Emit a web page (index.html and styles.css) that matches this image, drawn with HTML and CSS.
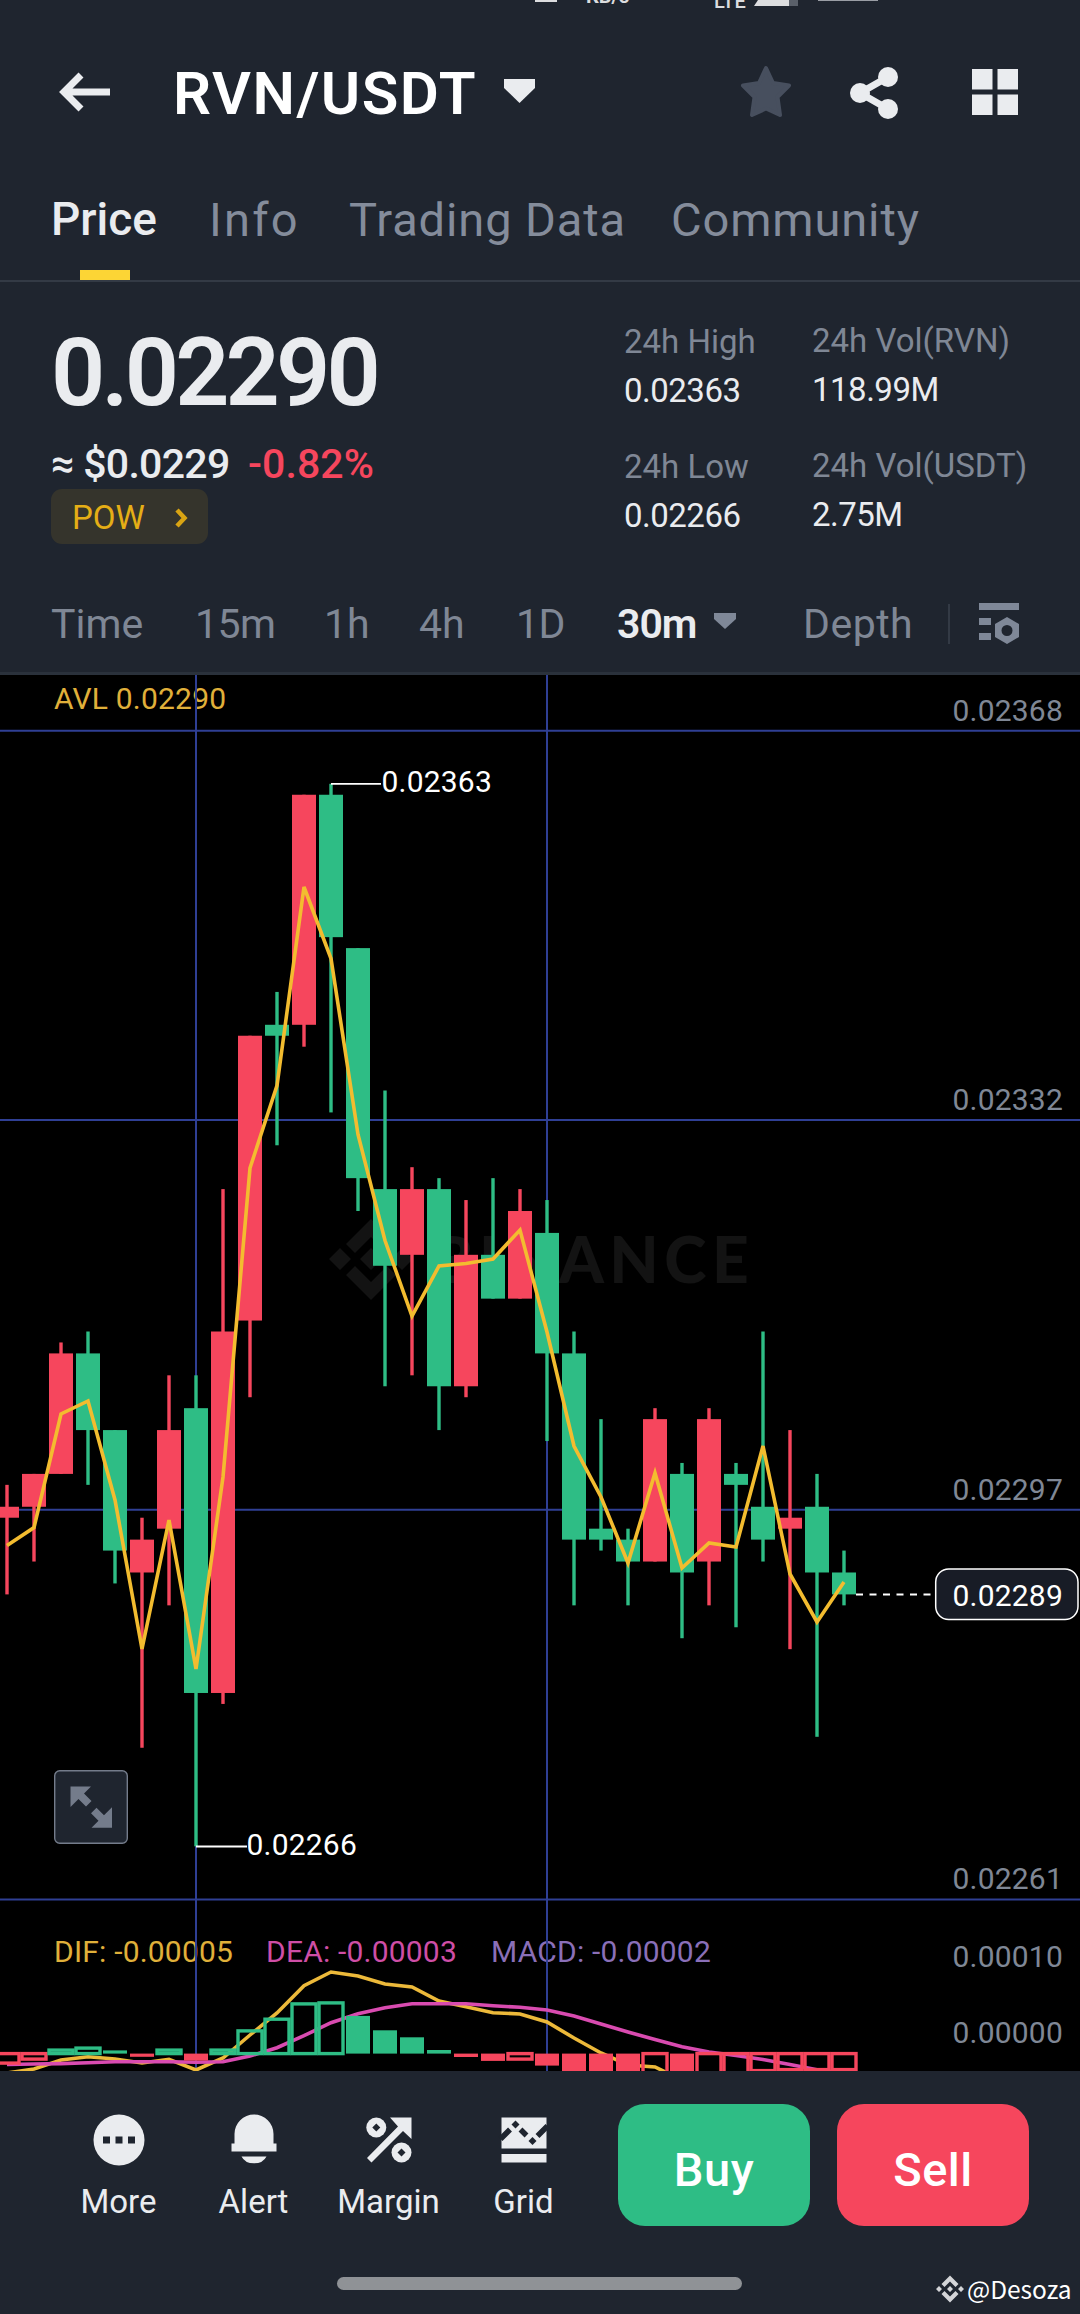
FILE: index.html
```html
<!DOCTYPE html>
<html lang="en">
<head>
    <meta charset="UTF-8">
    <meta name="viewport" content="width=device-width, initial-scale=1.0">
    <title>RVN/USDT</title>
    <link rel="stylesheet" href="styles.css">
</head>
<body>
    <div class="status-bar">
        <span class="status-glyph"></span>
        <span class="status-speed">KB/s</span>
        <span class="status-lte">LTE</span>
        <svg class="status-signal" width="44" height="6" viewBox="0 0 44 6">
            <path d="M4 0H35V6H0Z" fill="#dcdddf"/>
            <path d="M35 0H44V6H35Z" fill="#5a606a"/>
        </svg>
        <span class="status-battery"></span>
    </div>

    <header class="header">
        <svg class="back" width="52" height="40" viewBox="0 0 52 40">
            <path d="M51 20H5M22 3L5 20L22 37" fill="none" stroke="#eaecef" stroke-width="7"/>
        </svg>
        <h1 class="pair">RVN/USDT</h1>
        <svg class="pair-caret" width="32" height="25" viewBox="0 0 32 25">
            <path d="M0 0H31V9L15.5 24L0 9Z" fill="#eaecef"/>
        </svg>
        <svg class="star" width="52" height="54" viewBox="0 0 52 54">
            <path d="M26 3L33 18L49 20.5L37.500 32L40 50L26 43.500L12 50L14.500 32L3 20.500L19 18Z" fill="#474f5e" stroke="#474f5e" stroke-width="4" stroke-linejoin="round"/>
        </svg>
        <svg class="share" width="50" height="54" viewBox="0 0 50 54">
            <path d="M39 11L11 27L39 43" fill="none" stroke="#eaecef" stroke-width="7"/>
            <circle cx="39" cy="11" r="10" fill="#eaecef"/>
            <circle cx="11" cy="27" r="10" fill="#eaecef"/>
            <circle cx="39" cy="43" r="10" fill="#eaecef"/>
        </svg>
        <svg class="apps" width="46" height="46" viewBox="0 0 46 46">
            <path d="M0 0H20.500V20.500H0ZM25.500 0H46V20.500H25.500ZM0 25.500H20.500V46H0ZM25.500 25.500H46V46H25.500Z" fill="#eaecef"/>
        </svg>
    </header>

    <nav class="tabs">
        <a class="tab active">Price</a>
        <a class="tab tab-info">Info</a>
        <a class="tab tab-trading">Trading Data</a>
        <a class="tab tab-community">Community</a>
    </nav>

    <section class="ticker">
        <div class="ticker-main">
            <div class="last-price">0.02290</div>
            <div class="fiat-row">
                <span class="fiat">≈ $0.0229</span>
                <span class="change">-0.82%</span>
            </div>
            <div class="chip">
                <span>POW</span>
                <svg width="14" height="20" viewBox="0 0 14 20">
                    <path d="M3 2L10.500 10L3 18" fill="none" stroke="#d9a413" stroke-width="4.500"/>
                </svg>
            </div>
        </div>
        <div class="stats stats-price">
            <div class="stat-label">24h High</div>
            <div class="stat-value">0.02363</div>
            <div class="stat-label">24h Low</div>
            <div class="stat-value">0.02266</div>
        </div>
        <div class="stats stats-volume">
            <div class="stat-label">24h Vol(RVN)</div>
            <div class="stat-value">118.99M</div>
            <div class="stat-label">24h Vol(USDT)</div>
            <div class="stat-value">2.75M</div>
        </div>
    </section>

    <div class="intervals">
        <span class="interval i-time">Time</span>
        <span class="interval i-15m">15m</span>
        <span class="interval i-1h">1h</span>
        <span class="interval i-4h">4h</span>
        <span class="interval i-1d">1D</span>
        <span class="interval i-30m">30m</span>
        <svg class="i-caret" width="23" height="17" viewBox="0 0 23 17">
            <path d="M0 0H22V6L11 16L0 6Z" fill="#7f8898"/>
        </svg>
        <span class="interval i-depth">Depth</span>
        <span class="divider"></span>
        <svg class="i-settings" width="41" height="42" viewBox="0 0 41 42">
            <path d="M0 0H40V7H0ZM0 15H12V22H0ZM0 30H12V37H0Z" fill="#7f8898"/>
            <path fill-rule="evenodd" d="M28 14L40 21V34L28 41L16 34V21ZM28 22A5.500 5.500 0 1 0 28 33A5.500 5.500 0 1 0 28 22Z" fill="#7f8898"/>
        </svg>
    </div>

    <main class="chart">
        <!-- y of the viewBox starts where the chart panel starts on the page -->
        <svg id="chart" width="1080" height="1396" viewBox="0 675 1080 1396">
            <g class="watermark">
                <path d="M346 1244L371 1219L396 1244L387 1253L371 1237L355 1253ZM329 1259L340 1248L351 1259L340 1270ZM360 1259L371 1248L382 1259L371 1270ZM391 1259L402 1248L413 1259L402 1270ZM346 1275L355 1266L371 1282L387 1266L396 1275L371 1300Z"/>
                <text x="431" y="1283" textLength="318">BINANCE</text>
            </g>
            <text class="avl-text" x="54" y="708.500">AVL 0.02290</text>
            <g class="macd-text">
                <text class="dif" x="54" y="1961.500">DIF: -0.00005</text>
                <text class="dea" x="266" y="1961.500">DEA: -0.00003</text>
                <text class="macd" x="491" y="1961.500">MACD: -0.00002</text>
            </g>
            <g class="grid-lines">
                <path d="M0 730.700H1080M0 1120H1080M0 1509.700H1080M0 1899.500H1080M196 675V2071M547 675V2071"/>
            </g>
            <g id="macd-lines"></g>
            <g id="macd-bars"></g>
            <g id="candles"></g>
            <g id="avl"></g>
            <g class="marks">
                <path d="M331 783.800H381M196 1846.500H247"/>
                <path d="M856 1594.500H931" stroke-dasharray="7 6.500"/>
                <text x="381.500" y="791.700">0.02363</text>
                <text x="246.500" y="1854.500">0.02266</text>
            </g>
            <g class="axis">
                <text x="1063" y="720.500">0.02368</text>
                <text x="1063" y="1110">0.02332</text>
                <text x="1063" y="1499.600">0.02297</text>
                <text x="1063" y="1889">0.02261</text>
                <text x="1063" y="1967">0.00010</text>
                <text x="1063" y="2042.700">0.00000</text>
            </g>
            <g class="price-tag">
                <rect x="935.700" y="1569" width="142.300" height="50.500" rx="13"/>
                <text x="1063" y="1606">0.02289</text>
            </g>
            <g class="expand">
                <rect x="54.700" y="1770.700" width="72.600" height="72.600" rx="5"/>
                <path d="M70.500 1786.500H91L84 1793.500L91.500 1801L86 1806.500L78.500 1799L70.500 1807ZM112 1827.700H91.500L98.500 1820.700L91 1813.200L96.500 1807.700L104 1815.200L112 1807.200Z"/>
            </g>
        </svg>
    </main>

    <footer class="bottom-bar">
        <div class="actions">
            <div class="action">
                <svg width="52" height="52" viewBox="0 0 52 52">
                    <circle cx="26" cy="26" r="25.500" fill="#eaecef"/>
                    <path d="M10 22.500H17V29.500H10ZM22.500 22.500H29.500V29.500H22.500ZM35 22.500H42V29.500H35Z" fill="#1f252f"/>
                </svg>
                <span>More</span>
            </div>
            <div class="action">
                <svg width="52" height="52" viewBox="0 0 52 52">
                    <path d="M6.500 20A19.500 19.500 0 0 1 45.500 20V29.500H48.500V37.500H3.500V29.500H6.500ZM13.500 42.500H38.500A13.500 11 0 0 1 13.500 42.500Z" fill="#eaecef"/>
                </svg>
                <span>Alert</span>
            </div>
            <div class="action">
                <svg width="52" height="52" viewBox="0 0 52 52">
                    <circle cx="13.300" cy="13.500" r="10" fill="#eaecef"/>
                    <circle cx="38.500" cy="38.500" r="10" fill="#eaecef"/>
                    <path d="M13.300 9.500L17.300 13.500L13.300 17.500L9.300 13.500ZM38.500 34.500L42.500 38.500L38.500 42.500L34.500 38.500Z" fill="#1f252f"/>
                    <path d="M27 3.500H48.500V25L40 17L8.500 48.500L4 44L35 12.500Z" fill="#eaecef"/>
                </svg>
                <span>Margin</span>
            </div>
            <div class="action">
                <svg width="52" height="52" viewBox="0 0 52 52">
                    <path d="M3.500 3.500H48.500V34.500H3.500ZM3.500 40H48.500V48.500H3.500Z" fill="#eaecef"/>
                    <path d="M2.500 25L12 15.500M22.500 15.500L28.500 21.500M39.500 22L49.500 12" stroke="#1f252f" stroke-width="5.500"/>
                    <path d="M17.500 6.500L21.500 10.500L17.500 14.500L13.500 10.500ZM34.500 23L38.500 27L34.500 31L30.500 27Z" fill="#1f252f"/>
                </svg>
                <span>Grid</span>
            </div>
        </div>
        <button class="trade buy">Buy</button>
        <button class="trade sell">Sell</button>
        <div class="home-indicator"></div>
        <div class="credit">
            <svg width="28" height="28" viewBox="0 0 28 28">
                <path d="M5.500 9L14 0.500L22.500 9L19.500 12L14 6.500L8.500 12ZM0 14L3 11L6 14L3 17ZM11 14L14 11L17 14L14 17ZM22 14L25 11L28 14L25 17ZM5.500 19L8.500 16L14 21.500L19.500 16L22.500 19L14 27.500Z" fill="#d4d5d8"/>
            </svg>
            <span>@Desoza</span>
        </div>
    </footer>
    <script src="script.js"></script>
</body>
</html>
```
FILE: styles.css
```css
body {
    margin: 0;
    width: 1080px;
    height: 2314px;
    overflow: hidden;
    background: #1f252f;
    color: #eaecef;
    font-family: Roboto, "Liberation Sans", sans-serif;
    display: flex;
    flex-direction: column;
}
svg {
    display: block;
    flex: none;
}

/* status bar, scrolled almost out of view */
.status-bar {
    height: 10px;
    overflow: hidden;
    display: flex;
    align-items: flex-start;
    padding-left: 535px;
    font-size: 20px;
    line-height: 20px;
    font-weight: 700;
    color: #dcdddf;
}
.status-glyph {
    width: 22px;
    height: 2px;
    background: #dcdddf;
    margin-right: 29px;
}
.status-speed {
    width: 45px;
    margin-right: 83px;
    margin-top: -14px;
}
.status-lte {
    width: 33px;
    margin-right: 7px;
    margin-top: -9px;
    font-weight: 500;
}
.status-battery {
    width: 60px;
    height: 1px;
    margin-left: 20px;
    background: #9a9ea5;
}

.header {
    height: 166px;
    display: flex;
    align-items: center;
    padding-left: 59px;
}
.back {
    margin-top: -3px;
}
.pair {
    width: 331px;
    margin: 1px 0 0;
    padding-left: 62px;
    font-size: 60px;
    font-weight: 600;
    letter-spacing: 1.5px;
    color: #fff;
}
.pair-caret {
    margin-top: -4px;
}
.star {
    margin-left: 204px;
    margin-top: -2px;
}
.share {
    margin-left: 57px;
    margin-top: -1px;
}
.apps {
    margin-left: 73px;
    margin-top: -2px;
}

.tabs {
    height: 104px;
    border-bottom: 2px solid #333a45;
    display: flex;
    padding-left: 51px;
    font-size: 47px;
    color: #848c9b;
}
.tab {
    position: relative;
    padding-top: 16px;
    width: 158px;
}
.tab-info {
    width: 140px;
    letter-spacing: 2.2px;
}
.tab-trading {
    width: 322px;
    letter-spacing: 0.9px;
}
.tab-community {
    width: 300px;
    letter-spacing: 0.9px;
}
.active {
    color: #eaecef;
    font-weight: 500;
    font-size: 46px;
}
.active::after {
    content: "";
    position: absolute;
    left: 29px;
    bottom: 0;
    width: 50px;
    height: 10px;
    background: #fcd535;
}

.ticker {
    height: 278px;
    display: flex;
    padding-left: 51px;
}
.ticker-main {
    width: 573px;
}
.last-price {
    padding-top: 36px;
    height: 118px;
    box-sizing: border-box;
    font-size: 95px;
    line-height: 110px;
    font-weight: 600;
    letter-spacing: -3.8px;
}
.fiat-row {
    display: flex;
    margin-top: 39px;
    height: 50px;
    line-height: 50px;
    font-size: 41px;
    font-weight: 500;
}
.fiat {
    width: 197px;
    letter-spacing: -0.7px;
}
.change {
    color: #f6465d;
    letter-spacing: 0.1px;
}
.chip {
    box-sizing: border-box;
    width: 157px;
    height: 55px;
    border-radius: 11px;
    background: #35342c;
    color: #e5ae16;
    display: flex;
    align-items: center;
    justify-content: space-between;
    padding: 2px 20px 0 21px;
    font-size: 33px;
}
.stats {
    width: 188px;
    padding-top: 38px;
    white-space: nowrap;
    font-size: 33px;
}
.stats-volume {
    padding-top: 37px;
}
.stat-label {
    height: 49px;
    line-height: 44px;
    color: #7f8795;
}
.stat-value {
    height: 76px;
    line-height: 44px;
    letter-spacing: -0.5px;
}

.intervals {
    box-sizing: border-box;
    height: 115px;
    padding-top: 15px;
    border-bottom: 3px solid #2a313b;
    display: flex;
    align-items: center;
    padding-left: 51px;
    font-size: 41px;
    color: #7f8795;
}
.i-time { width: 144px; }
.i-15m { width: 129px; letter-spacing: -0.5px; }
.i-1h { width: 95px; }
.i-4h { width: 97px; }
.i-1d { width: 101px; letter-spacing: -0.5px; }
.i-30m {
    width: 97px;
    color: #eaecef;
    font-weight: 600;
    letter-spacing: -1px;
}
.i-caret {
    margin-top: -4px;
}
.i-depth {
    width: 145px;
    margin-left: 66px;
    letter-spacing: 0.5px;
}
.divider {
    width: 2px;
    height: 40px;
    margin-right: 29px;
    background: #333a45;
}

.chart {
    height: 1396px;
    background: #000;
}
.chart text {
    font-size: 30px;
    letter-spacing: 0.2px;
}
.watermark {
    fill: #131313;
}
.chart .watermark text {
    font-family: Lato, sans-serif;
    font-size: 64px;
    font-weight: 900;
}
.grid-lines path {
    stroke: #2f3f94;
    stroke-width: 2;
}
.avl-text, .dif { fill: #e0b03a; }
.dea { fill: #cf4ea6; }
.macd { fill: #8a6fb8; }
.marks path {
    stroke: #fff;
    stroke-width: 1.8;
}
.marks text {
    fill: #fff;
}
.axis text {
    fill: #7f8795;
    text-anchor: end;
}
.price-tag rect {
    fill: #181c26;
    stroke: #fff;
    stroke-width: 1.5;
}
.price-tag text {
    fill: #fff;
    text-anchor: end;
}
.expand rect {
    fill: #1f252f;
    stroke: #747c8b;
    stroke-width: 1.4;
}
.expand path {
    fill: #747c8b;
}

.bottom-bar {
    position: relative;
    height: 243px;
    display: flex;
    align-items: flex-start;
    padding-left: 51px;
}
.actions {
    display: flex;
    width: 567px;
    padding-top: 43px;
}
.action {
    width: 135px;
    display: flex;
    flex-direction: column;
    align-items: center;
    font-size: 33px;
}
.action span {
    margin-top: 16px;
}
.trade {
    width: 192px;
    height: 122px;
    margin: 33px 27px 0 0;
    padding: 8px 0 0;
    border: none;
    border-radius: 27px;
    color: #fff;
    font-family: inherit;
    font-size: 47px;
    font-weight: 500;
    letter-spacing: 0.5px;
}
.buy { background: #2ebd85; }
.sell { background: #f6465d; }
.home-indicator {
    position: absolute;
    left: 337px;
    top: 206px;
    width: 405px;
    height: 13px;
    border-radius: 7px;
    background: #8f9296;
}
.credit {
    position: absolute;
    left: 936px;
    top: 202px;
    display: flex;
    align-items: center;
    gap: 3px;
    color: #fff;
    font-family: "Noto Sans CJK SC", "Noto Sans", sans-serif;
    font-size: 24.5px;
    line-height: 32px;
}
```
FILE: script.js
```js
// [body top, body bottom, high, low, color] in units of 0.00001
const candles = [
    [2297, 2296, 2299, 2289, 'r'],
    [2300, 2297, 2300, 2292, 'r'],
    [2311, 2300, 2312, 2300, 'r'],
    [2311, 2304, 2313, 2299, 'g'],
    [2304, 2293, 2304, 2290, 'g'],
    [2294, 2291, 2296, 2275, 'r'],
    [2304, 2295, 2309, 2288, 'r'],
    [2306, 2280, 2309, 2266, 'g'],
    [2313, 2280, 2326, 2279, 'r'],
    [2340, 2314, 2340, 2307, 'r'],
    [2341, 2340, 2344, 2330, 'g'],
    [2362, 2341, 2362, 2339, 'r'],
    [2362, 2349, 2363, 2333, 'g'],
    [2348, 2327, 2348, 2324, 'g'],
    [2326, 2319, 2335, 2308, 'g'],
    [2326, 2320, 2328, 2309, 'r'],
    [2326, 2308, 2327, 2304, 'g'],
    [2320, 2308, 2325, 2307, 'r'],
    [2320, 2316, 2327, 2316, 'g'],
    [2324, 2316, 2326, 2316, 'r'],
    [2322, 2311, 2325, 2303, 'g'],
    [2311, 2294, 2313, 2288, 'g'],
    [2295, 2294, 2305, 2293, 'g'],
    [2294, 2292, 2295, 2288, 'g'],
    [2305, 2292, 2306, 2292, 'r'],
    [2300, 2291, 2301, 2285, 'g'],
    [2305, 2292, 2306, 2288, 'r'],
    [2300, 2299, 2301, 2286, 'g'],
    [2297, 2294, 2313, 2292, 'g'],
    [2296, 2295, 2304, 2284, 'r'],
    [2297, 2291, 2300, 2276, 'g'],
    [2291, 2289, 2293, 2288, 'g']
];

const avl = [1545.6, 1527.6, 1414, 1401, 1500, 1649, 1520, 1669, 1477, 1168, 1085.5, 887, 958.5, 1134.5, 1240.5, 1316,
    1266, 1263.5, 1259, 1230, 1332, 1446, 1497, 1563, 1473, 1568, 1543, 1547, 1446, 1574, 1622, 1582];

const dif = [2073, 2069, 2060, 2056.7, 2059, 2063, 2059.3, 2070, 2058, 2035, 2013, 1985.7, 1972, 1976, 1984, 1987,
    2001, 2006.7, 2012.7, 2014, 2022, 2038, 2053, 2065, 2067, 2080];

const dea = [2064.5, 2064, 2063.6, 2062.7, 2061.7, 2061.7, 2061.7, 2062.3, 2061.7, 2056, 2047.7, 2035.7, 2022.7, 2013.7, 2007.7, 2003.7,
    2003.7, 2003.7, 2005.7, 2007.3, 2010, 2016, 2024, 2032, 2039.5, 2046.7, 2052, 2055.5, 2059.5, 2064.5, 2069.7, 2073];

// height above zero, hollow bar or not
const macd = [
    [-9.5, 1], [-5.5, 1], [3.5, 1], [5.5, 1], [3.2, 0], [-3.2, 0], [3.5, 1], [-7, 0],
    [3.5, 1], [22.7, 1], [34.4, 1], [49.7, 1], [50.7, 1], [37.7, 0], [23.3, 0], [16.3, 0],
    [3.6, 0], [-3.4, 0], [-7.3, 0], [-5.5, 1], [-12, 0], [-22, 0], [-22, 0], [-22, 0],
    [-22, 1], [-22, 0], [-22, 1], [-22, 1], [-17, 1], [-16, 1], [-16, 1], [-16, 1]
];

const colors = { g: '#2ebd85', r: '#f6465d' };
const zeroY = 2053.6;

function x(i) {
    return 7 + i * 27;
}

function y(price) {
    return 783.8 + (2363 - price) * 10.954;
}

function add(parent, name, attrs) {
    const el = document.createElementNS('http://www.w3.org/2000/svg', name);
    for (const key in attrs) {
        el.setAttribute(key, attrs[key]);
    }
    document.getElementById(parent).appendChild(el);
}

function line(parent, values, color) {
    add(parent, 'polyline', {
        points: values.map((v, i) => x(i) + ',' + v).join(' '),
        fill: 'none',
        stroke: color,
        'stroke-width': 3.6
    });
}

candles.forEach(([top, bottom, high, low, c], i) => {
    add('candles', 'rect', { x: x(i) - 1.7, y: y(high), width: 3.4, height: y(low) - y(high), fill: colors[c] });
    add('candles', 'rect', { x: x(i) - 12, y: y(top), width: 24, height: y(bottom) - y(top), fill: colors[c] });
});

line('avl', avl, '#f3bc2f');
line('macd-lines', dif, '#ecb93a');
line('macd-lines', dea, '#d94bb0');

macd.forEach(([h, hollow], i) => {
    const color = h > 0 ? colors.g : colors.r;
    add('macd-bars', 'rect', {
        x: x(i) - 12,
        y: h > 0 ? zeroY - h : zeroY,
        width: 24,
        height: Math.abs(h),
        fill: hollow ? 'none' : color,
        stroke: hollow ? color : 'none',
        'stroke-width': 3.4
    });
});
```
